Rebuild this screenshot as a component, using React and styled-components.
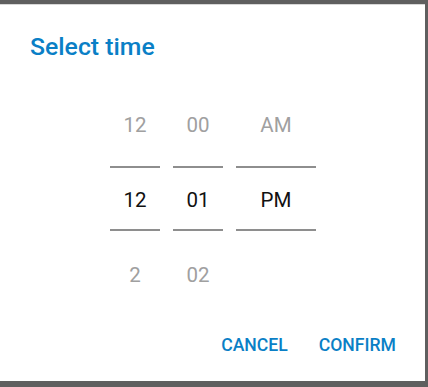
import React from 'react';
import styled, { createGlobalStyle } from 'styled-components';

const GlobalStyle = createGlobalStyle`
	html, body {
		margin: 0;
		padding: 0;
		background: #5f5f5f;
		font-family: 'Roboto', 'Liberation Sans', sans-serif;
	}
`;

const Dialog = styled.div`
	margin-top: 4px;
	width: 425px;
	height: 377px;
	background: #fff;
	border-top: 1px solid #d8d8d8;
	box-sizing: border-box;
	display: flex;
	flex-direction: column;
`;

const Title = styled.h2`
	margin: 0;
	padding: 27px 0 0 30px;
	font-size: 24.8px;
	font-weight: 500;
	line-height: 30px;
	color: #0a7fc6;
`;

const Picker = styled.div`
	display: flex;
	justify-content: flex-start;
	gap: 13px;
	padding-left: 110px;
	margin-top: 51px;
`;

const Column = styled.div`
	width: ${(p) => p.width}px;
	display: flex;
	flex-direction: column;
	align-items: stretch;
`;

const Cell = styled.div`
	height: 24px;
	line-height: 24px;
	font-size: 20.5px;
	text-align: center;
	color: ${(p) => (p.selected ? '#111' : '#a0a0a0')};
`;

const Selected = styled.div`
	margin-top: 29px;
	border-top: 2px solid #8e8e8e;
	border-bottom: 2px solid #8e8e8e;
	padding-top: 3px;
	box-sizing: content-box;
	display: flex;
	align-items: center;
	justify-content: center;
	height: 58px;
`;

const Below = styled(Cell)`
	margin-top: 32px;
`;

const Actions = styled.div`
	margin-top: auto;
	margin-bottom: 25px;
	display: flex;
	justify-content: flex-end;
	gap: 31px;
	padding-right: 29px;
`;

const Button = styled.button`
	border: none;
	background: none;
	padding: 0;
	font-family: 'Roboto', 'Liberation Sans', sans-serif;
	font-size: 17.6px;
	font-weight: 500;
	line-height: 22px;
	color: #0a7fc6;
	cursor: pointer;
`;

const columns = [
	{ width: 50, above: '12', value: '12', below: '2' },
	{ width: 50, above: '00', value: '01', below: '02' },
	{ width: 80, above: 'AM', value: 'PM', below: '' },
];

const App = () => {
	return (
		<>
			<GlobalStyle />
			<Dialog>
				<Title>Select time</Title>
				<Picker>
					{columns.map((c, i) => (
						<Column key={i} width={c.width}>
							<Cell>{c.above}</Cell>
							<Selected>
								<Cell selected>{c.value}</Cell>
							</Selected>
							<Below>{c.below}</Below>
						</Column>
					))}
				</Picker>
				<Actions>
					<Button>CANCEL</Button>
					<Button>CONFIRM</Button>
				</Actions>
			</Dialog>
		</>
	);
};

export default App;
